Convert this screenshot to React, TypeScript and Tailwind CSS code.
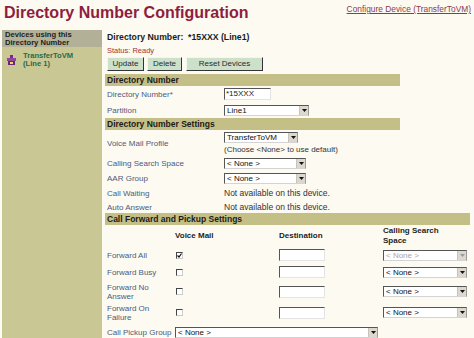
import clsx from "clsx";

function Arrow({ disabled }: { disabled?: boolean }) {
  return (
    <span className="flex w-[9px] items-center justify-center border-l border-[#c8c4bc] bg-[#dcd8d0]">
      <svg width="5" height="3" viewBox="0 0 5 3">
        <path d="M0 0h5L2.5 3z" fill={disabled ? "#9a9a9a" : "#111"} />
      </svg>
    </span>
  );
}

function Select({ value, className, disabled }: { value: string; className: string; disabled?: boolean }) {
  return (
    <div
      className={clsx(
        "flex h-[11px] border border-t-[#555] border-l-[#555] border-r-[#9a9a9a] border-b-[#d4d4d4] bg-white",
        className,
      )}
    >
      <span
        className={clsx(
          "flex-1 truncate pl-[2px] text-[8px] leading-[9px]",
          disabled ? "text-[#a8a8a8]" : "text-[#111]",
        )}
      >
        {value}
      </span>
      <Arrow disabled={disabled} />
    </div>
  );
}

function TextBox({ value, className }: { value?: string; className: string }) {
  return (
    <div
      className={clsx(
        "h-[12px] border border-t-[#555] border-l-[#555] border-r-[#e4e4e4] border-b-[#e4e4e4] bg-white pl-[1px] text-[8px] leading-[10px] text-[#222]",
        className,
      )}
    >
      {value}
    </div>
  );
}

function Check({ checked }: { checked?: boolean }) {
  return (
    <span className="flex h-[7px] w-[7px] items-center justify-center border border-t-[#444] border-l-[#444] border-r-[#ccc] border-b-[#ccc] bg-white">
      {checked && (
        <svg width="5" height="5" viewBox="0 0 5 5">
          <path d="M0.5 2.5L2 4L4.5 0.5" stroke="#111" strokeWidth="1.2" fill="none" />
        </svg>
      )}
    </span>
  );
}

function Bar({ title, className }: { title: string; className: string }) {
  return (
    <div className={clsx("h-[12px] bg-[#c3bf86] pl-[2px] text-[8.5px] font-bold leading-[12px] text-[#1b1b1b]", className)}>
      {title}
    </div>
  );
}

function Btn({ label, className }: { label: string; className: string }) {
  return (
    <div
      className={clsx(
        "flex h-[14px] items-center justify-center border border-t-[#f2f7f0] border-l-[#f2f7f0] border-r-[#333] border-b-[#333] bg-[#cde0c9] text-[8px] text-[#2a2a2a]",
        className,
      )}
    >
      {label}
    </div>
  );
}

const label = "text-[8px] leading-[9px] text-[#4c5a7c]";

function Row({ name, h, children }: { name: string; h: string; children: React.ReactNode }) {
  return (
    <div className={clsx("flex items-center pl-[2px]", h)}>
      <div className={clsx("w-[117px]", label)}>{name}</div>
      <div>{children}</div>
    </div>
  );
}

function FwdRow({ name, h, checked, disabled }: { name: React.ReactNode; h: string; checked?: boolean; disabled?: boolean }) {
  return (
    <div className={clsx("flex items-center pl-[2px]", h)}>
      <div className={clsx("w-[68px]", label)}>{name}</div>
      <div className="w-[104px] pl-[1px]">
        <Check checked={checked} />
      </div>
      <div className="w-[104px]">
        <TextBox className="w-[46px]" />
      </div>
      <Select value="< None >" className="w-[84px]" disabled={disabled} />
    </div>
  );
}

export default function App() {
  return (
    <div className="h-[338px] w-[474px] overflow-hidden bg-[#fcfaf1] font-['Liberation_Sans',Arial,sans-serif] text-[#333]">
      <div className="flex h-[30px] justify-between">
        <h1 className="pl-[4px] pt-[3px] text-[16px] font-bold leading-[20px] text-[#8f1d3f]">
          Directory Number Configuration
        </h1>
        <a className="pr-[3px] pt-[4px] text-[8.4px] leading-[10px] text-[#8b3a55] underline">
          Configure Device (TransferToVM)
        </a>
      </div>

      <div className="flex">
        <aside className="ml-[2px] h-[308px] w-[100px] bg-[#c9c793]">
          <div className="h-[17px] bg-[#b2b097] pl-[3px] pt-[1px] text-[7.6px] font-bold leading-[8px] text-[#222]">
            Devices using this
            <br />
            Directory Number
          </div>
          <div className="mt-[5px] flex">
            <svg className="ml-[5px] mt-[3px]" width="9" height="10" viewBox="0 0 9 10">
              <rect x="3" y="0" width="3" height="4" fill="#7b2b8c" />
              <rect x="0" y="3" width="9" height="3" fill="#93449f" />
              <rect x="1" y="6" width="7" height="4" fill="#6a2478" />
              <rect x="3" y="7" width="3" height="2" fill="#e6dc6a" />
            </svg>
            <div className="ml-[7px] text-[7.6px] font-bold leading-[8px] text-[#2c6a4c]">
              TransferToVM
              <br />
              (Line 1)
            </div>
          </div>
        </aside>

        <main className="ml-[3px] flex-1">
          <div className="flex h-[16px] items-center whitespace-pre pl-[2px] text-[8.7px] font-bold text-[#1a1a1a]">
            Directory Number:  *15XXX (Line1)
          </div>
          <div className="flex h-[9px] items-center pl-[2px] text-[7.5px] text-[#a63232]">Status: Ready</div>
          <div className="flex h-[18px] gap-[3px] pl-[2px] pt-[2px]">
            <Btn label="Update" className="w-[37px]" />
            <Btn label="Delete" className="w-[35px]" />
            <Btn label="Reset Devices" className="ml-[1px] w-[77px]" />
          </div>

          <Bar title="Directory Number" className="mt-[1px] w-[295px]" />
          <Row name="Directory Number*" h="h-[16px]">
            <TextBox value="*15XXX" className="w-[47px]" />
          </Row>
          <Row name="Partition" h="h-[16px]">
            <Select value="Line1" className="w-[85px]" />
          </Row>

          <Bar title="Directory Number Settings" className="w-[295px]" />
          <div className="flex h-[26px] items-center pl-[2px]">
            <div className={clsx("w-[117px]", label)}>Voice Mail Profile</div>
            <div className="flex flex-col gap-[2px]">
              <Select value="TransferToVM" className="w-[74px]" />
              <div className="text-[8px] leading-[9px] text-[#333]">(Choose &lt;None&gt; to use default)</div>
            </div>
          </div>
          <Row name="Calling Search Space" h="h-[15px]">
            <Select value="< None >" className="w-[82px]" />
          </Row>
          <Row name="AAR Group" h="h-[15px]">
            <Select value="< None >" className="w-[82px]" />
          </Row>
          <Row name="Call Waiting" h="h-[15px]">
            <div className="text-[8.5px] leading-[9px] text-[#333]">Not available on this device.</div>
          </Row>
          <Row name="Auto Answer" h="h-[12px]">
            <div className="text-[8.5px] leading-[9px] text-[#333]">Not available on this device.</div>
          </Row>

          <Bar title="Call Forward and Pickup Settings" className="w-[365px]" />
          <div className="flex h-[22px] items-center pl-[2px] text-[8px] font-bold leading-[10px] text-[#1e1e1e]">
            <div className="w-[68px]" />
            <div className="w-[104px]">Voice Mail</div>
            <div className="w-[104px]">Destination</div>
            <div>
              Calling Search
              <br />
              Space
            </div>
          </div>
          <FwdRow name="Forward All" h="h-[16px]" checked disabled />
          <FwdRow name="Forward Busy" h="h-[18px]" />
          <FwdRow
            name={
              <>
                Forward No
                <br />
                Answer
              </>
            }
            h="h-[21px]"
          />
          <FwdRow
            name={
              <>
                Forward On
                <br />
                Failure
              </>
            }
            h="h-[21px]"
          />
          <div className="flex h-[16px] items-start pl-[2px] pt-[4px]">
            <div className={clsx("w-[68px] pt-[1px]", label)}>Call Pickup Group</div>
            <Select value="< None >" className="w-[203px]" />
          </div>
        </main>
      </div>
    </div>
  );
}
